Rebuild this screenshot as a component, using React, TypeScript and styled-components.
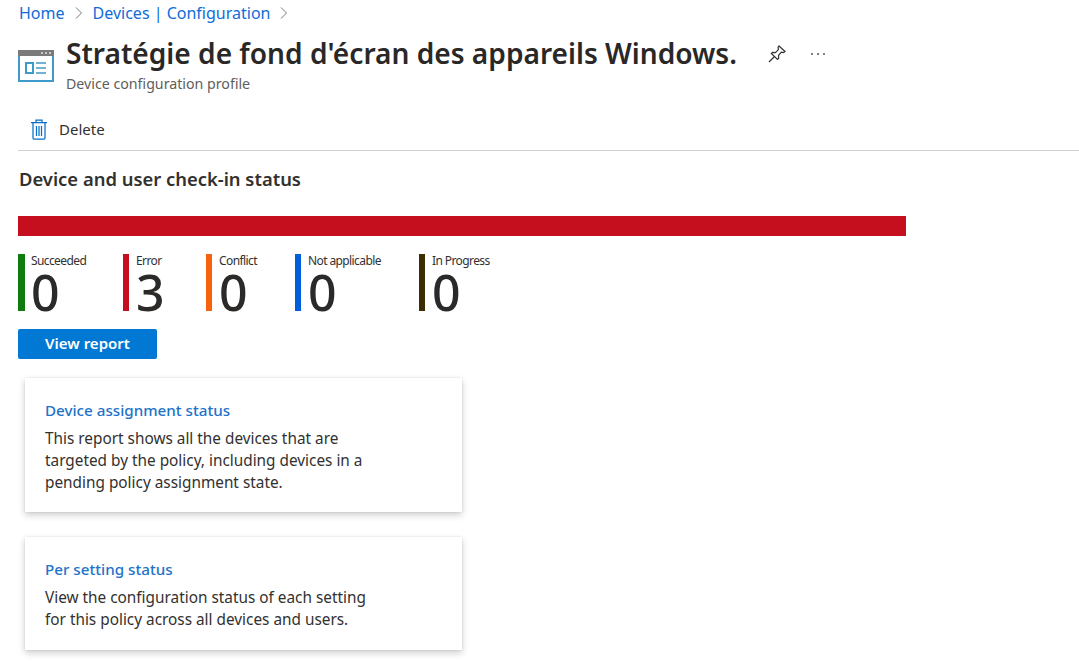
import React from 'react'
import styled, { createGlobalStyle } from 'styled-components'

const GlobalStyle = createGlobalStyle`
  html, body {
    margin: 0;
    padding: 0;
    background: #fff;
    overflow: hidden;
    font-family: "Noto Sans", "Open Sans", sans-serif;
    color: #323130;
  }
`

const Page = styled.div`
  width: 1079px;
  height: 662px;
  overflow: hidden;
`

const Breadcrumbs = styled.nav`
  display: flex;
  align-items: center;
  height: 26px;
  padding-left: 19px;
  font-size: 16px;
  color: #0f6cd8;
`

const Crumb = styled.span``

const Chevron = styled.svg`
  width: 10px;
  height: 12px;
  margin: 0 9px;
  fill: none;
  stroke: #777;
  stroke-width: 1;
`

const Header = styled.header`
  display: flex;
  padding: 9px 0 0 18px;
  height: 69px;
  box-sizing: border-box;
`

const BladeIcon = styled.svg`
  width: 36px;
  height: 32px;
  margin-top: 15px;
  margin-right: 12px;
  flex: none;
`

const TitleBlock = styled.div`
  display: flex;
  flex-direction: column;
`

const TitleRow = styled.div`
  display: flex;
  align-items: center;
`

const Title = styled.h1`
  margin: 0;
  font-size: 28.1px;
  line-height: 36px;
  font-weight: 600;
  color: #292827;
`

const PinIcon = styled.svg`
  width: 18px;
  height: 18px;
  margin: 2px 0 0 31px;
  fill: none;
  stroke: #333;
  stroke-width: 1.2;
`

const More = styled.div`
  display: flex;
  gap: 4px;
  margin: 2px 0 0 25px;
`

const Dot = styled.i`
  width: 2px;
  height: 2px;
  border-radius: 50%;
  background: #555;
`

const Subtitle = styled.div`
  font-size: 14.2px;
  line-height: 18px;
  margin-top: 4px;
  color: #605e5c;
`

const Toolbar = styled.div`
  display: flex;
  align-items: center;
  gap: 11px;
  height: 56px;
  margin-left: 18px;
  padding: 12px 0 0 12px;
  box-sizing: border-box;
  border-bottom: 1px solid #d2d0ce;
  font-size: 15px;
`

const TrashIcon = styled.svg`
  width: 18px;
  height: 22px;
  fill: none;
  stroke: #0a6fc8;
  stroke-width: 1.25;
`

const Section = styled.section`
  padding-left: 18px;
`

const SectionTitle = styled.h2`
  margin: 0;
  padding: 16px 0 0 1px;
  height: 65px;
  box-sizing: border-box;
  font-size: 18.4px;
  line-height: 24px;
  font-weight: 600;
  color: #323130;
`

const StatusBar = styled.div`
  width: 888px;
  height: 20px;
  background: #c50f1f;
`

const Legend = styled.div`
  display: flex;
  margin-top: 18px;
`

const LegendItem = styled.div<{ $color: string; $width: number }>`
  width: ${p => p.$width}px;
  height: 57px;
  display: flex;
  flex-direction: column;
  box-sizing: border-box;
  border-left: solid ${p => p.$color};
  border-left-width: ${p => (p.$color === '#107c10' ? 7 : 6)}px;
  padding-left: ${p => (p.$color === '#107c10' ? 6 : 7)}px;
`

const LegendLabel = styled.div`
  font-size: 12px;
  line-height: 14px;
  letter-spacing: -0.6px;
  color: #323130;
`

const LegendValue = styled.div`
  font-size: 50px;
  font-weight: 500;
  line-height: 43px;
  margin: 3px 0 0;
  color: #2b2a29;
`

const PrimaryButton = styled.button`
  display: block;
  width: 139px;
  height: 30px;
  margin-top: 18px;
  padding: 0 0 2px;
  border: 0;
  border-radius: 2px;
  background: #0078d4;
  color: #fff;
  font-family: inherit;
  font-size: 15px;
  font-weight: 600;
`

const Cards = styled.div`
  display: flex;
  flex-direction: column;
  gap: 25px;
  margin: 19px 0 0 7px;
`

const Card = styled.article<{ $height: number }>`
  width: 437px;
  height: ${p => p.$height}px;
  box-sizing: border-box;
  padding: 22px 20px 0;
  background: #fff;
  box-shadow: 0 3px 7px rgba(0, 0, 0, 0.2), 0 0 2px rgba(0, 0, 0, 0.1);
`

const CardTitle = styled.a`
  display: block;
  font-size: 15.2px;
  line-height: 20px;
  font-weight: 500;
  color: #2272c9;
`

const CardText = styled.p`
  margin: 7px 0 0;
  font-size: 15.35px;
  line-height: 22px;
  color: #323130;
  white-space: pre-line;
`

const legend = [
  { label: 'Succeeded', value: 0, color: '#107c10', width: 105 },
  { label: 'Error', value: 3, color: '#c50f1f', width: 83 },
  { label: 'Conflict', value: 0, color: '#f7630c', width: 89 },
  { label: 'Not applicable', value: 0, color: '#005fdb', width: 124 },
  { label: 'In Progress', value: 0, color: '#3b2e00', width: 100 },
]

const ChevronRight = () => (
  <Chevron viewBox="0 0 10 12">
    <path d="M2 .5L7.500 6 2 11.500" />
  </Chevron>
)

export default function App() {
  return (
    <Page>
      <GlobalStyle />
      <Breadcrumbs>
        <Crumb>Home</Crumb>
        <ChevronRight />
        <Crumb>Devices | Configuration</Crumb>
        <ChevronRight />
      </Breadcrumbs>
      <Header>
        <BladeIcon viewBox="0 0 36 32">
          <rect x="0" y="0" width="36" height="6" fill="#7a7a7a" />
          <path d="M1 6v25h34V6" fill="none" stroke="#3f9bc9" strokeWidth="2" />
          <rect x="8" y="13" width="7" height="10" fill="none" stroke="#3f9bc9" strokeWidth="2" />
          <path d="M18 13h10M18 18h10M18 23h10" stroke="#3f9bc9" strokeWidth="1.6" />
          <path d="M23 3h2M27 3h2M31 3h2" stroke="#e4e4e4" strokeWidth="1.6" />
        </BladeIcon>
        <TitleBlock>
          <TitleRow>
            <Title>Stratégie de fond d'écran des appareils Windows.</Title>
            <PinIcon viewBox="0 0 18 18">
              <path d="M11 1l6 5.500-1.500 1-2.200-.3-2.800 3.300.2 2.800-1.200 1.200-6.200-6 1.200-1.200 2.900.3 3-3-.3-2.300zM6.500 11.500L1 17" />
            </PinIcon>
            <More>
              <Dot />
              <Dot />
              <Dot />
            </More>
          </TitleRow>
          <Subtitle>Device configuration profile</Subtitle>
        </TitleBlock>
      </Header>
      <Toolbar>
        <TrashIcon viewBox="0 0 18 22">
          <path d="M1 4.500h16M3 4.500v15.500a1 1 0 0 0 1 1h10a1 1 0 0 0 1-1V4.500M6 4.500V2h6v2.500M6.500 8v10M9 8v10M11.500 8v10" />
        </TrashIcon>
        Delete
      </Toolbar>
      <Section>
        <SectionTitle>Device and user check-in status</SectionTitle>
        <StatusBar />
        <Legend>
          {legend.map(item => (
            <LegendItem key={item.label} $color={item.color} $width={item.width}>
              <LegendLabel>{item.label}</LegendLabel>
              <LegendValue>{item.value}</LegendValue>
            </LegendItem>
          ))}
        </Legend>
        <PrimaryButton>View report</PrimaryButton>
        <Cards>
          <Card $height={134}>
            <CardTitle>Device assignment status</CardTitle>
            <CardText>
              {'This report shows all the devices that are\ntargeted by the policy, including devices in a\npending policy assignment state.'}
            </CardText>
          </Card>
          <Card $height={113}>
            <CardTitle>Per setting status</CardTitle>
            <CardText>
              {'View the configuration status of each setting\nfor this policy across all devices and users.'}
            </CardText>
          </Card>
        </Cards>
      </Section>
    </Page>
  )
}
